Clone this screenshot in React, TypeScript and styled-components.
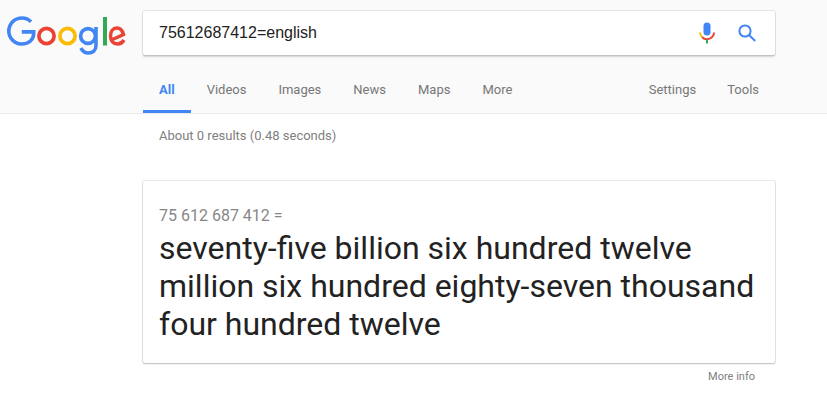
import React from "react";
import styled, { createGlobalStyle } from "styled-components";

const Global = createGlobalStyle`
  html, body { margin: 0; padding: 0; background: #fff; }
  body { font-family: Roboto, "Liberation Sans", Arial, sans-serif; }
`;
const Page = styled.div`
  width: 827px;
  height: 417px;
  overflow: hidden;
  background: #fff;
`;
const Header = styled.header`
  height: 113px;
  background: #fafafa;
  border-bottom: 1px solid #ebebeb;
  box-sizing: content-box;
`;
const TopRow = styled.div`
  display: flex;
  align-items: flex-start;
  height: 55px;
  padding-top: 11px;
  box-sizing: border-box;
`;
const LogoSlot = styled.div`
  width: 143px;
  flex: none;
  height: 44px;
`;
const SearchBox = styled.div`
  width: 632px;
  height: 44px;
  background: #fff;
  border-radius: 2px;
  box-shadow: 0 2px 2px 0 rgba(0,0,0,.16), 0 0 0 1px rgba(0,0,0,.08);
  display: flex;
  align-items: center;
  padding-left: 16px;
  box-sizing: border-box;
`;
const Query = styled.div`
  flex: 1;
  font-family: "Liberation Sans", Arial, sans-serif;
  font-size: 16px;
  color: #222;
`;
const IconGroup = styled.div`
  display: flex;
  align-items: center;
  gap: 23px;
  padding-right: 19px;
`;
const Tabs = styled.nav`
  display: flex;
  height: 58px;
  padding: 0 0 0 143px;
  box-sizing: border-box;
  width: 775px;
`;
const Tab = styled.a<{ $active?: boolean; $push?: boolean; $tight?: boolean }>`
  display: block;
  height: 58px;
  padding: 27px 16px 0;
  box-sizing: border-box;
  font-size: 13px;
  line-height: 16px;
  font-weight: ${(p) => (p.$active ? 700 : 400)};
  color: ${(p) => (p.$active ? "#4285f4" : "#777")};
  border-bottom: 3px solid ${(p) => (p.$active ? "#4285f4" : "transparent")};
  margin-left: ${(p) => (p.$push ? "auto" : p.$tight ? "-1px" : "0")};
`;
const Stats = styled.div`
  margin: 14px 0 0 159px;
  height: 16px;
  font-size: 13px;
  line-height: 16px;
  color: #808080;
`;
const Card = styled.section`
  margin: 37px 0 0 143px;
  width: 632px;
  height: 182px;
  box-sizing: border-box;
  background: #fff;
  border-radius: 2px;
  box-shadow: 0 1px 2px rgba(0,0,0,.2), 0 0 0 1px rgba(0,0,0,.08);
  padding: 25px 16px 0;
`;
const Equation = styled.div`
  font-size: 16px;
  line-height: 20px;
  color: #878787;
`;
const Answer = styled.div`
  margin-top: 3px;
  font-size: 32px;
  line-height: 38px;
  color: #222;
`;
const MoreInfo = styled.a`
  display: block;
  width: 612px;
  margin: 7px 0 0 143px;
  text-align: right;
  font-size: 11px;
  line-height: 13px;
  color: #808080;
`;

const Logo = () => (
  <svg width="143" height="44" viewBox="0 11 143 44" fill="none" style={{ display: "block" }}>
    <path d="M31 21.8 A13 13 0 1 0 21.8 44 C29 44 33.7 39.5 33.7 33.5 V31.9 H21.8" stroke="#4285f4" strokeWidth="3.6" />
    <circle cx="46.5" cy="36" r="7.6" stroke="#ea4335" strokeWidth="3.7" />
    <circle cx="67.5" cy="36" r="7.6" stroke="#fbbc05" strokeWidth="3.7" />
    <circle cx="88" cy="36" r="7.4" stroke="#4285f4" strokeWidth="3.6" />
    <path d="M96 27 V45.5 C96 50.5 92.5 53 88.5 53 C85 53 82.3 51 81 48" stroke="#4285f4" strokeWidth="3.6" />
    <path d="M105 17 V45.5" stroke="#34a853" strokeWidth="4" />
    <path d="M112.5 39.5 L123.5 34.6 C122.5 30.5 120 28 116.8 28 C113 28 110.5 31.5 110.5 36 C110.5 40.7 113.5 44 117.5 44 C120.5 44 122.5 42.5 124 40" stroke="#ea4335" strokeWidth="3.5" />
  </svg>
);

const Mic = () => (
  <svg width="16" height="22" viewBox="0 0 16 22" fill="none" style={{ display: "block" }}>
    <rect x="4.5" y="0.5" width="7" height="13" rx="3.5" fill="#4285f4" />
    <path d="M1 10.5 A7 7 0 0 0 3 15" stroke="#fbbc05" strokeWidth="2" />
    <path d="M3 15 A7 7 0 0 0 15 10.5" stroke="#ea4335" strokeWidth="2" />
    <rect x="7" y="17.5" width="2" height="4" fill="#34a853" />
  </svg>
);

const Search = () => (
  <svg width="18" height="18" viewBox="0 0 18 18" fill="none" style={{ display: "block" }}>
    <circle cx="7" cy="7" r="5.6" stroke="#4285f4" strokeWidth="2" />
    <path d="M11 11 L17.2 17" stroke="#4285f4" strokeWidth="2" />
  </svg>
);

export default function App() {
  return (
    <Page>
      <Global />
      <Header>
        <TopRow>
          <LogoSlot><Logo /></LogoSlot>
          <SearchBox>
            <Query>75612687412=english</Query>
            <IconGroup><Mic /><Search /></IconGroup>
          </SearchBox>
        </TopRow>
        <Tabs>
          <Tab $active>All</Tab>
          <Tab>Videos</Tab>
          <Tab>Images</Tab>
          <Tab>News</Tab>
          <Tab>Maps</Tab>
          <Tab>More</Tab>
          <Tab $push>Settings</Tab>
          <Tab $tight>Tools</Tab>
        </Tabs>
      </Header>
      <Stats>About 0 results (0.48 seconds)</Stats>
      <Card>
        <Equation>75 612 687 412 =</Equation>
        <Answer>seventy-five billion six hundred twelve million six hundred eighty-seven thousand four hundred twelve</Answer>
      </Card>
      <MoreInfo>More info</MoreInfo>
    </Page>
  );
}
